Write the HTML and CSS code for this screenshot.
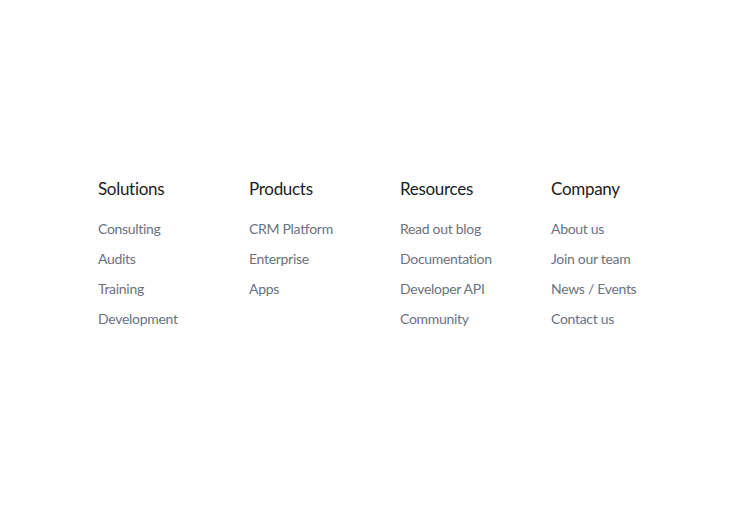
FILE: index.html
```html
<!DOCTYPE html>
<html lang="en">

<head>
    <meta charset="UTF-8">
    <meta name="viewport" content="width=device-width, initial-scale=1.0">
    <title>Footer Links</title>
    <link rel="stylesheet" href="styles.css">
</head>

<body>

    <footer class="footer">
        <div class="footer-grid">
            <div class="footer-col">
                <h3 class="footer-title">Solutions</h3>
                <ul class="footer-links">
                    <li><a href="#">Consulting</a></li>
                    <li><a href="#">Audits</a></li>
                    <li><a href="#">Training</a></li>
                    <li><a href="#">Development</a></li>
                </ul>
            </div>
            <div class="footer-col">
                <h3 class="footer-title">Products</h3>
                <ul class="footer-links">
                    <li><a href="#">CRM Platform</a></li>
                    <li><a href="#">Enterprise</a></li>
                    <li><a href="#">Apps</a></li>
                </ul>
            </div>
            <div class="footer-col">
                <h3 class="footer-title">Resources</h3>
                <ul class="footer-links">
                    <li><a href="#">Read out blog</a></li>
                    <li><a href="#">Documentation</a></li>
                    <li><a href="#">Developer API</a></li>
                    <li><a href="#">Community</a></li>
                </ul>
            </div>
            <div class="footer-col">
                <h3 class="footer-title">Company</h3>
                <ul class="footer-links">
                    <li><a href="#">About us</a></li>
                    <li><a href="#">Join our team</a></li>
                    <li><a href="#">News / Events</a></li>
                    <li><a href="#">Contact us</a></li>
                </ul>
            </div>
        </div>
    </footer>

</body>

</html>
```

FILE: styles.css
```css
/* Basic Reset */
* {
    box-sizing: border-box;
    margin: 0;
    padding: 0;
}

body {
    background-color: #ffffff;
    font-family: Lato, "Open Sans", sans-serif;
    height: 100vh;
    display: flex;
    align-items: center;
}

.footer {
    width: 100%;
    padding: 0 98px 12px;
}

.footer-grid {
    display: grid;
    grid-template-columns: repeat(4, 151px);
}

.footer-title {
    font-size: 17px;
    font-weight: 400;
    line-height: 24px;
    letter-spacing: -0.3px;
    color: #1a1d24;
    margin-bottom: 17px;
}

.footer-links {
    list-style: none;
    display: flex;
    flex-direction: column;
    gap: 7.7px;
}

.footer-links li {
    font-size: 14px;
    line-height: 22px;
}

.footer-links a {
    letter-spacing: -0.3px;
    color: #6b7280;
    text-decoration: none;
}
```
